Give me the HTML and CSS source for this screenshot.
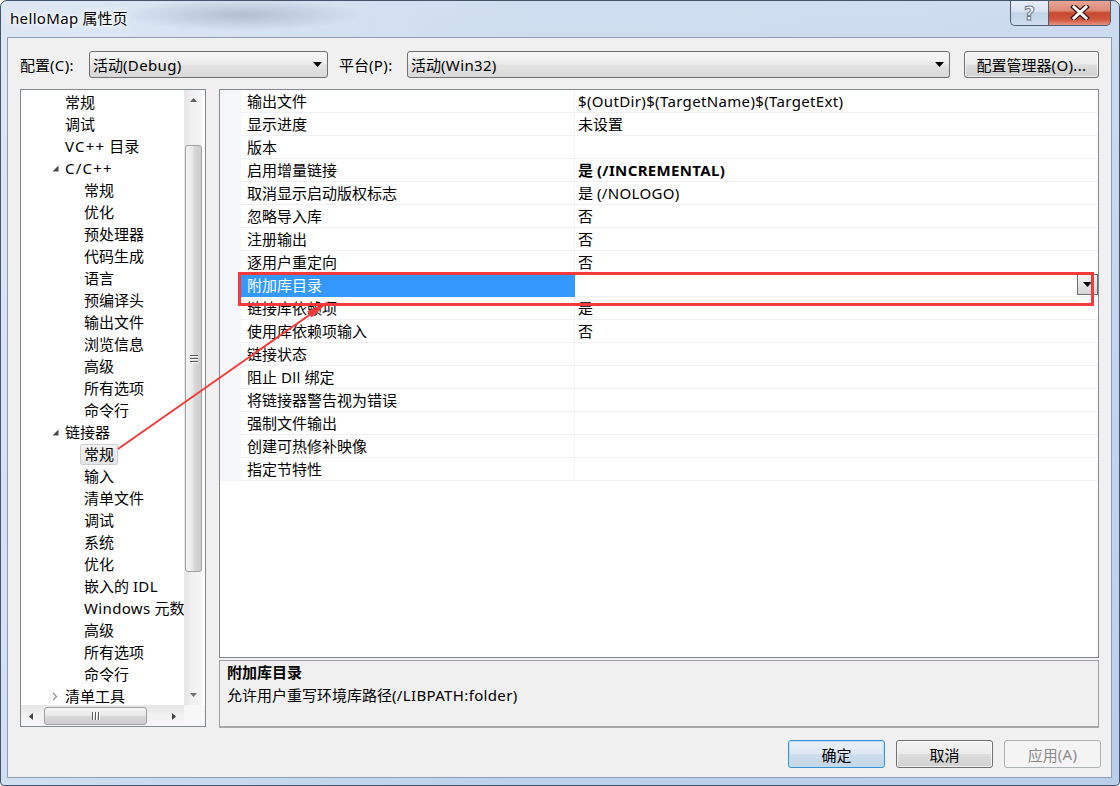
FILE: index.html
```html
<!DOCTYPE html>
<html lang="zh-CN">
<head>
<meta charset="utf-8">
<title>helloMap 属性页</title>
<link rel="stylesheet" href="styles.css">
</head>
<body>
<div class="window">
  <div class="titlebar">
    <span class="title"><span class="lat">helloMap</span> 属性页</span>
    <div class="caps">
      <div class="cap help"><span class="qmark">?</span></div>
      <div class="cap close">
        <svg width="20" height="15" viewBox="0 0 20 15"><path d="M4 2 L16 13 M16 2 L4 13" stroke="#3b1a14" stroke-width="5.5" stroke-linecap="square"/><path d="M4 2 L16 13 M16 2 L4 13" stroke="#ffffff" stroke-width="3" stroke-linecap="square"/></svg>
      </div>
    </div>
  </div>
  <div class="frame">
    <div class="client">
      <div class="toprow">
        <span class="lbl lbl1">配置<span class="lat">(C):</span></span>
        <div class="combo combo1"><span>活动<span class="lat">(Debug)</span></span><svg width="9" height="5" viewBox="0 0 9 5"><polygon points="0,0 9,0 4.5,5" fill="#000"/></svg></div>
        <span class="lbl lbl2">平台<span class="lat">(P):</span></span>
        <div class="combo combo2"><span>活动<span class="lat">(Win32)</span></span><svg width="9" height="5" viewBox="0 0 9 5"><polygon points="0,0 9,0 4.5,5" fill="#000"/></svg></div>
        <div class="btn mgr">配置管理器<span class="lat">(O)...</span></div>
      </div>
      <div class="main">
        <div class="tree">
          <div class="tree-top">
            <div class="tree-list">
              <div class="ti l1"><span class="tg"></span>常规</div>
              <div class="ti l1"><span class="tg"></span>调试</div>
              <div class="ti l1"><span class="tg"></span><span class="lat2">VC++</span>&nbsp;目录</div>
              <div class="ti l1"><span class="tg"><svg width="7" height="7" viewBox="0 0 7 7"><polygon points="6.5,0.5 6.5,6.5 0.5,6.5" fill="#4a4a4a"/></svg></span><span class="lat2">C/C++</span></div>
              <div class="ti l2"><span class="tg"></span>常规</div>
              <div class="ti l2"><span class="tg"></span>优化</div>
              <div class="ti l2"><span class="tg"></span>预处理器</div>
              <div class="ti l2"><span class="tg"></span>代码生成</div>
              <div class="ti l2"><span class="tg"></span>语言</div>
              <div class="ti l2"><span class="tg"></span>预编译头</div>
              <div class="ti l2"><span class="tg"></span>输出文件</div>
              <div class="ti l2"><span class="tg"></span>浏览信息</div>
              <div class="ti l2"><span class="tg"></span>高级</div>
              <div class="ti l2"><span class="tg"></span>所有选项</div>
              <div class="ti l2"><span class="tg"></span>命令行</div>
              <div class="ti l1"><span class="tg"><svg width="7" height="7" viewBox="0 0 7 7"><polygon points="6.5,0.5 6.5,6.5 0.5,6.5" fill="#4a4a4a"/></svg></span>链接器</div>
              <div class="ti l2"><span class="tg"></span><span class="sel">常规</span></div>
              <div class="ti l2"><span class="tg"></span>输入</div>
              <div class="ti l2"><span class="tg"></span>清单文件</div>
              <div class="ti l2"><span class="tg"></span>调试</div>
              <div class="ti l2"><span class="tg"></span>系统</div>
              <div class="ti l2"><span class="tg"></span>优化</div>
              <div class="ti l2"><span class="tg"></span>嵌入的&nbsp;<span class="lat">IDL</span></div>
              <div class="ti l2"><span class="tg"></span><span class="lat">Windows</span>&nbsp;元数据</div>
              <div class="ti l2"><span class="tg"></span>高级</div>
              <div class="ti l2"><span class="tg"></span>所有选项</div>
              <div class="ti l2"><span class="tg"></span>命令行</div>
              <div class="ti l1"><span class="tg"><svg width="6" height="9" viewBox="0 0 6 9"><polyline points="1,0.8 4.6,4.5 1,8.2" fill="none" stroke="#8a8a8a" stroke-width="1.1"/></svg></span>清单工具</div>
            </div>
            <div class="vscroll">
              <div class="sb-btn"><svg width="7" height="4" viewBox="0 0 7 4"><polygon points="0,4 3.5,0 7,4" fill="#606060"/></svg></div>
              <div class="sb-gap-top"></div>
              <div class="vthumb"><div class="grip-h"><i></i><i></i><i></i></div></div>
              <div class="sb-fill"></div>
              <div class="sb-btn"><svg width="7" height="4" viewBox="0 0 7 4"><polygon points="0,0 7,0 3.5,4" fill="#707070"/></svg></div>
            </div>
          </div>
          <div class="tree-bottom">
            <div class="hscroll">
              <div class="hb-btn"><svg width="4" height="7" viewBox="0 0 4 7"><polygon points="4,0 4,7 0,3.5" fill="#404040"/></svg></div>
              <div class="hthumb"><div class="grip-v"><i></i><i></i><i></i></div></div>
              <div class="sb-fill"></div>
              <div class="hb-btn"><svg width="4" height="7" viewBox="0 0 4 7"><polygon points="0,0 0,7 4,3.5" fill="#404040"/></svg></div>
            </div>
            <div class="corner"></div>
          </div>
        </div>
        <div class="rightcol">
          <div class="grid">
            <div class="row"><div class="gut"></div><div class="nm">输出文件</div><div class="vl lat">$(OutDir)$(TargetName)$(TargetExt)</div></div>
            <div class="row"><div class="gut"></div><div class="nm">显示进度</div><div class="vl">未设置</div></div>
            <div class="row"><div class="gut"></div><div class="nm">版本</div><div class="vl"></div></div>
            <div class="row"><div class="gut"></div><div class="nm">启用增量链接</div><div class="vl bold">是&nbsp;<span class="lat">(/INCREMENTAL)</span></div></div>
            <div class="row"><div class="gut"></div><div class="nm">取消显示启动版权标志</div><div class="vl">是&nbsp;<span class="lat">(/NOLOGO)</span></div></div>
            <div class="row"><div class="gut"></div><div class="nm">忽略导入库</div><div class="vl">否</div></div>
            <div class="row"><div class="gut"></div><div class="nm">注册输出</div><div class="vl">否</div></div>
            <div class="row"><div class="gut"></div><div class="nm">逐用户重定向</div><div class="vl">否</div></div>
            <div class="row selrow"><div class="gut"></div><div class="nm">附加库目录</div><div class="vl"><span class="dd"><svg width="9" height="5" viewBox="0 0 9 5"><polygon points="0,0 9,0 4.5,5" fill="#000"/></svg></span></div></div>
            <div class="row"><div class="gut"></div><div class="nm">链接库依赖项</div><div class="vl">是</div></div>
            <div class="row"><div class="gut"></div><div class="nm">使用库依赖项输入</div><div class="vl">否</div></div>
            <div class="row"><div class="gut"></div><div class="nm">链接状态</div><div class="vl"></div></div>
            <div class="row"><div class="gut"></div><div class="nm">阻止 <span class="lat">Dll</span> 绑定</div><div class="vl"></div></div>
            <div class="row"><div class="gut"></div><div class="nm">将链接器警告视为错误</div><div class="vl"></div></div>
            <div class="row"><div class="gut"></div><div class="nm">强制文件输出</div><div class="vl"></div></div>
            <div class="row"><div class="gut"></div><div class="nm">创建可热修补映像</div><div class="vl"></div></div>
            <div class="row"><div class="gut"></div><div class="nm">指定节特性</div><div class="vl"></div></div>
          </div>
          <div class="desc">
            <div class="desc-title">附加库目录</div>
            <div class="desc-text">允许用户重写环境库路径<span class="lat">(/LIBPATH:folder)</span></div>
          </div>
        </div>
      </div>
      <div class="btnrow">
        <div class="btn dlg def">确定</div>
        <div class="btn dlg">取消</div>
        <div class="btn dlg dis">应用<span class="lat">(A)</span></div>
      </div>
    </div>
  </div>
  <div class="annot-rect"></div>
  <svg class="annot-arrow" width="1120" height="786" viewBox="0 0 1120 786">
    <line x1="118" y1="449" x2="318" y2="309" stroke="#f03a3a" stroke-width="2"/>
    <polygon points="330,300.5 311.6,317.4 307.2,311.2" fill="#f03a3a"/>
  </svg>
</div>
</body>
</html>
```
FILE: styles.css
```css
* { box-sizing: border-box; }
html, body { margin: 0; padding: 0; }
body {
  width: 1120px;
  height: 786px;
  overflow: hidden;
  font-family: "Noto Sans", "Noto Sans CJK SC", sans-serif;
  font-size: 15px;
  color: #000;
  background: #ffffff;
}

.lat { letter-spacing: 0.35px; }
.lat2 { letter-spacing: 1.2px; }

.window {
  position: relative;
  width: 1120px;
  height: 786px;
  border: 1px solid #44546a;
  border-radius: 7px 7px 4px 4px;
  background:
    radial-gradient(ellipse 120px 16px at 240px 14px, rgba(110,125,150,0.35), rgba(110,125,150,0) 100%),
    linear-gradient(90deg, rgba(255,255,255,0.35) 0%, rgba(255,255,255,0.05) 45%, rgba(255,255,255,0) 100%),
    linear-gradient(180deg, #cddcef 0%, #c3d6ed 40%, #b9cfea 100%);
  overflow: hidden;
}

/* title bar */
.titlebar {
  height: 36px;
  display: flex;
  justify-content: space-between;
  align-items: flex-start;
  padding: 0 8px 0 9px;
}
.title {
  margin-top: 6px;
  line-height: 22px;
  font-size: 15px;
  text-shadow: 0 0 6px #ffffff, 0 0 10px #ffffff, 0 0 3px #ffffff;
}
.caps {
  display: flex;
  margin-top: -1px;
}
.cap {
  height: 26px;
  border: 1px solid #4f5d70;
  border-top: none;
  display: flex;
  align-items: center;
  justify-content: center;
}
.help {
  width: 38px;
  border-radius: 0 0 0 5px;
  border-right: none;
  background: linear-gradient(180deg, #e8eef6 0%, #dae4f0 45%, #c2d3e7 52%, #cfdeef 100%);
}
.qmark {
  font-family: "DejaVu Sans", sans-serif;
  font-size: 19px;
  font-weight: bold;
  line-height: 20px;
  color: #ffffff;
  -webkit-text-stroke: 1px #6d7888;
}
.close {
  width: 63px;
  border-radius: 0 0 5px 0;
  background: linear-gradient(180deg, #e9a898 0%, #dc8a77 42%, #c7472f 52%, #d2593f 80%, #e39581 100%);
}

/* frame & client */
.frame {
  padding: 0 7px 7px 6px;
}
.client {
  height: 741px;
  border: 1px solid #8e9db2;
  background: #f0f0f0;
  padding: 13px 12px 9px 12px;
  display: flex;
  flex-direction: column;
}

.toprow {
  height: 27px;
  display: flex;
  align-items: center;
}
.lbl { line-height: 20px; }
.lbl1 { width: 69px; }
.lbl2 { width: 68px; margin-left: 11px; }
.combo {
  height: 27px;
  border: 1px solid #707070;
  border-radius: 3px;
  background: linear-gradient(180deg, #f6f6f6 0%, #ededed 48%, #e2e2e2 52%, #d9d9d9 100%);
  display: flex;
  align-items: center;
  justify-content: space-between;
  padding: 0 5px 0 3px;
}
.combo1 { width: 239px; }
.combo2 { width: 543px; }
.btn {
  border: 1px solid #707070;
  border-radius: 3px;
  background: linear-gradient(180deg, #f4f4f4 0%, #ececec 48%, #dddddd 52%, #d1d1d1 100%);
  display: flex;
  align-items: center;
  justify-content: center;
  box-shadow: inset 0 0 0 1px rgba(255,255,255,0.7);
}
.mgr {
  height: 27px;
  width: 135px;
  margin-left: 14px;
}

.main {
  margin-top: 11px;
  height: 639px;
  display: flex;
}

/* tree */
.tree {
  width: 186px;
  height: 638px;
  border: 1px solid #828790;
  background: #ffffff;
  display: flex;
  flex-direction: column;
}
.tree-top {
  height: 615px;
  display: flex;
}
.tree-list {
  width: 163px;
  flex: none;
  overflow: hidden;
  padding-top: 1px;
}
.ti {
  height: 22px;
  line-height: 22px;
  white-space: nowrap;
  display: flex;
  align-items: center;
}
.ti.l1 { padding-left: 30px; }
.ti.l2 { padding-left: 49px; }
.tg {
  flex: none;
  width: 14px;
  height: 22px;
  display: flex;
  align-items: center;
  padding-left: 1px;
}
.sel {
  margin-left: -4px;
  padding: 0 3px;
  height: 21px;
  line-height: 19px;
  border: 1px solid #cfcfcf;
  border-radius: 2px;
  background: linear-gradient(180deg, #f2f2f2, #e4e4e4);
}

.vscroll {
  width: 18px;
  flex: none;
  display: flex;
  flex-direction: column;
  background: linear-gradient(90deg, #e6e6e6 0%, #f1f1f1 40%, #f6f6f6 100%);
  border-left: 1px solid #e8e8e8;
  margin-right: 3px;
}
.sb-btn {
  height: 20px;
  display: flex;
  align-items: center;
  justify-content: center;
}
.sb-gap-top { height: 35px; }
.sb-fill { flex: 1; }
.vthumb {
  height: 427px;
  border: 1px solid #a2a2a2;
  border-radius: 3px;
  background: linear-gradient(90deg, #f4f4f4 0%, #e9e9e9 45%, #d8d8d8 55%, #cdcdcd 100%);
  display: flex;
  align-items: center;
  justify-content: center;
}
.grip-h { display: flex; flex-direction: column; gap: 2px; }
.grip-h i {
  display: block;
  width: 8px;
  height: 1px;
  background: #5a5a5a;
  box-shadow: 0 1px 0 #f8f8f8;
}
.tree-bottom {
  height: 21px;
  display: flex;
}
.hscroll {
  width: 163px;
  flex: none;
  display: flex;
  background: linear-gradient(180deg, #e6e6e6 0%, #f1f1f1 40%, #f6f6f6 100%);
  border-top: 1px solid #e8e8e8;
}
.hb-btn {
  width: 20px;
  display: flex;
  align-items: center;
  justify-content: center;
}
.hthumb {
  width: 103px;
  margin-left: 3px;
  margin-top: 1px;
  margin-bottom: 1px;
  border: 1px solid #a2a2a2;
  border-radius: 3px;
  background: linear-gradient(180deg, #f4f4f4 0%, #e9e9e9 45%, #d8d8d8 55%, #cdcdcd 100%);
  display: flex;
  align-items: center;
  justify-content: center;
}
.grip-v { display: flex; gap: 2px; }
.grip-v i {
  display: block;
  width: 1px;
  height: 8px;
  background: #5a5a5a;
  box-shadow: 1px 0 0 #f8f8f8;
}
.corner {
  flex: 1;
  background: #f7f7f7;
}

/* property grid */
.rightcol {
  margin-left: 13px;
  width: 880px;
  display: flex;
  flex-direction: column;
}
.grid {
  height: 569px;
  border: 1px solid #828790;
  background: #ffffff;
}
.row {
  height: 23px;
  display: flex;
}
.gut {
  width: 21px;
  background: #f4f6fa;
}
.nm {
  width: 334px;
  padding-left: 6px;
  line-height: 22px;
  border-bottom: 1px solid #eef0f3;
  border-right: 1px solid #eef0f3;
  white-space: nowrap;
}
.vl {
  flex: 1;
  padding-left: 3px;
  line-height: 22px;
  border-bottom: 1px solid #eef0f3;
  white-space: nowrap;
  display: flex;
}
.vl.bold { font-weight: bold; }
.selrow .nm {
  background: #3399ff;
  color: #ffffff;
  border-bottom-color: #3399ff;
  border-right-color: #3399ff;
}
.selrow .vl { justify-content: flex-end; padding-right: 0; }
.dd {
  width: 21px;
  height: 21px;
  border: 1px solid #6f6f6f;
  background: linear-gradient(180deg, #f5f5f5 0%, #e6e6e6 50%, #d4d4d4 100%);
  display: flex;
  align-items: center;
  justify-content: center;
}

.desc {
  margin-top: 2px;
  height: 68px;
  border: 1px solid #a0a0a0;
  border-bottom: 2px solid #a8a8a8;
  background: #f0f0f0;
  padding: 0 7px;
}
.desc-title {
  font-weight: bold;
  line-height: 23px;
}
.desc-text {
  line-height: 23px;
}

/* dialog buttons */
.btnrow {
  margin-top: 12px;
  margin-right: -2px;
  height: 28px;
  display: flex;
  justify-content: flex-end;
  gap: 11px;
}
.dlg {
  width: 97px;
  height: 28px;
}
.def {
  border-color: #3c8fd0;
  background: linear-gradient(180deg, #e9f0f7 0%, #dfe9f3 48%, #cddceb 52%, #c5d6e6 100%);
  box-shadow: inset 0 0 0 1px #b6e0f8;
}
.dis {
  border-color: #adb2b5;
  background: #f4f4f4;
  color: #8b8b8b;
  box-shadow: none;
}

/* annotation overlay */
.annot-rect {
  position: absolute;
  left: 237px;
  top: 271px;
  width: 856px;
  height: 34px;
  border: 3px solid #f43a3a;
}
.annot-arrow {
  position: absolute;
  left: -1px;
  top: -1px;
  pointer-events: none;
}
```
